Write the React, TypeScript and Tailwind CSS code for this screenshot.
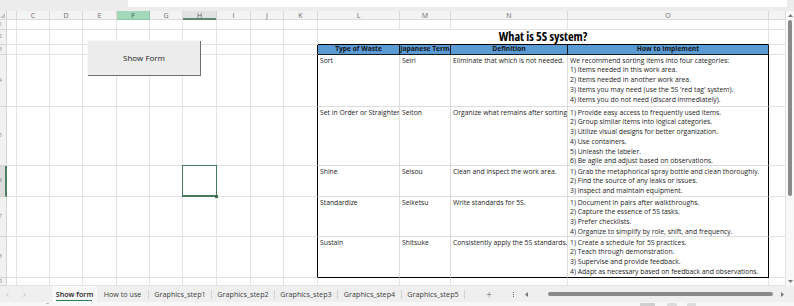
import React from "react";
import { ChevronLeft, ChevronRight } from "lucide-react";

type Entry = { l: string; m: string; n: string; o: string[] };

const data: Entry[] = [
  {
    l: "Sort",
    m: "Seiri",
    n: "Eliminate that which is not needed.",
    o: [
      "We recommend sorting items into four categories:",
      "1) Items needed in this work area.",
      "2) Items needed in another work area.",
      "3) Items you may need (use the 5S 'red tag' system).",
      "4) Items you do not need (discard immediately).",
    ],
  },
  {
    l: "Set in Order or Straighten",
    m: "Seiton",
    n: "Organize what remains after sorting.",
    o: [
      "1) Provide easy access to frequently used items.",
      "2) Group similar items into logical categories.",
      "3) Utilize visual designs for better organization.",
      "4) Use containers.",
      "5) Unleash the labeler.",
      "6) Be agile and adjust based on observations.",
    ],
  },
  {
    l: "Shine",
    m: "Seisou",
    n: "Clean and inspect the work area.",
    o: [
      "1) Grab the metaphorical spray bottle and clean thoroughly.",
      "2) Find the source of any leaks or issues.",
      "3) Inspect and maintain equipment.",
    ],
  },
  {
    l: "Standardize",
    m: "Seiketsu",
    n: "Write standards for 5S.",
    o: [
      "1) Document in pairs after walkthroughs.",
      "2) Capture the essence of 5S tasks.",
      "3) Prefer checklists.",
      "4) Organize to simplify by role, shift, and frequency.",
    ],
  },
  {
    l: "Sustain",
    m: "Shitsuke",
    n: "Consistently apply the 5S standards.",
    o: [
      "1) Create a schedule for 5S practices.",
      "2) Teach through demonstration.",
      "3) Supervise and provide feedback.",
      "4) Adapt as necessary based on feedback and observations.",
    ],
  },
];

const letters = ["", "", "C", "D", "E", "F", "G", "H", "I", "J", "K", "L", "M", "N", "O", ""];
const headers = ["Type of Waste", "Japanese Term", "Definition", "How to Implement"];

function Grid() {
  const cells: React.ReactNode[] = [];
  for (let r = 0; r < 10; r++) {
    for (let c = 0; c < 16; c++) {
      const key = `${r}-${c}`;
      if (r === 0) {
        if (c === 0) {
          cells.push(
            <div key={key} className="relative border-r border-b border-[#d4d4d4] bg-[#f1f1f1]">
              <svg className="absolute bottom-[1px] left-[0px]" width="5" height="5" viewBox="0 0 5 5">
                <polygon points="5,0 5,5 0,5" fill="#c4c4c4" />
              </svg>
            </div>
          );
        } else if (c === 5) {
          cells.push(
            <div key={key} className="flex items-center justify-center border-r border-b border-[#8cc6a5] bg-[#a3d8ba] text-[7px] leading-none text-[#2d6a46]">
              {letters[c]}
            </div>
          );
        } else if (c === 7) {
          cells.push(
            <div key={key} className="relative flex items-center justify-center border-r border-[#d4d4d4] bg-[#e2e2e2] text-[7px] leading-none text-[#555]">
              {letters[c]}
              <div className="absolute bottom-0 left-0 right-0 h-[2px] bg-[#5b8a6e]" />
            </div>
          );
        } else {
          cells.push(
            <div key={key} className="flex items-center justify-center border-r border-b border-[#dadada] bg-[#f3f3f3] text-[7px] leading-none text-[#6a6a6a]">
              {letters[c]}
            </div>
          );
        }
        continue;
      }
      if (c === 0) {
        if (r === 6) {
          cells.push(
            <div key={key} className="flex items-center overflow-hidden border-r-2 border-b border-r-[#4f7d61] border-b-[#cfcfcf] bg-[#dcdcdc] text-[5px] text-[#666]">
              <span className="-ml-[1px]">{r}</span>
            </div>
          );
        } else {
          cells.push(
            <div key={key} className="flex items-center overflow-hidden border-r border-b border-[#d6d6d6] bg-[#f1f1f1] text-[5px] text-[#888]">
              <span className="-ml-[1px]">{r}</span>
            </div>
          );
        }
        continue;
      }
      if (r === 2 && c >= 11 && c <= 14) {
        if (c === 11) {
          cells.push(
            <div
              key={key}
              className="col-span-4 flex items-end justify-center border-r border-b border-r-[#e3e3e3] border-b-black pb-[1px] font-stretch-condensed text-[12.3px] leading-[12px] font-bold text-black"
            >
              What is 5S system?
            </div>
          );
        }
        continue;
      }
      if (r === 3 && c >= 11 && c <= 14) {
        cells.push(
          <div
            key={key}
            className="flex items-center justify-center overflow-hidden whitespace-nowrap border-r border-b border-[#1a1a1a] bg-[#5b9bd5] font-stretch-[92%] text-[6.7px] font-bold text-[#141414]"
          >
            {headers[c - 11]}
          </div>
        );
        continue;
      }
      if (r >= 4 && r <= 8 && c >= 11 && c <= 14) {
        const e = data[r - 4];
        const rb = c === 14 ? "border-r-black" : "border-r-[#dcdcdc]";
        const bb = r === 8 ? "border-b-black" : "border-b-[#dcdcdc]";
        const lines = c === 11 ? [e.l] : c === 12 ? [e.m] : c === 13 ? [e.n] : e.o;
        cells.push(
          <div
            key={key}
            className={`overflow-hidden whitespace-nowrap border-r border-b ${rb} ${bb} px-[2px] pt-[0.5px] font-stretch-[90%] text-[6.8px] leading-[9.8px] text-[#1c1c1c]`}
          >
            {lines.map((t, i) => (
              <div key={i}>{t}</div>
            ))}
          </div>
        );
        continue;
      }
      if (c === 10 && r >= 3 && r <= 8) {
        cells.push(<div key={key} className="border-r border-b border-r-black border-b-[#e3e3e3]" />);
        continue;
      }
      if (r === 6 && c === 7) {
        cells.push(
          <div key={key} className="relative border-r border-b border-[#e3e3e3]">
            <div className="absolute -top-px -left-px -right-px -bottom-px border border-b-2 border-[#4a7a5d]" />
            <div className="absolute -right-[2px] -bottom-[2px] h-[3px] w-[3px] bg-[#3e6b50]" />
          </div>
        );
        continue;
      }
      cells.push(<div key={key} className="border-r border-b border-[#e3e3e3]" />);
    }
  }
  return (
    <div className="grid h-[275px] w-[786px] grid-cols-[7px_10px_33px_33px_34px_33px_33px_34px_34px_33px_34px_82px_51px_117px_201px_17px] grid-rows-[9px_10px_15px_10px_52px_59px_31px_40px_41px_8px] overflow-hidden">
      {cells}
    </div>
  );
}

function VScroll() {
  return (
    <div className="flex h-[275px] w-[8px] flex-col items-center bg-[#f8f8f8]">
      <svg className="mt-[3px]" width="5" height="3" viewBox="0 0 5 3">
        <polygon points="2.5,0 5,3 0,3" fill="#7a7a7a" />
      </svg>
      <div className="mt-[3px] h-[176px] w-[4px] rounded-full bg-[#8a8a8a]" />
      <div className="flex-1" />
      <svg className="mb-[3px]" width="5" height="3" viewBox="0 0 5 3">
        <polygon points="0,0 5,0 2.5,3" fill="#7a7a7a" />
      </svg>
    </div>
  );
}

function Sep() {
  return <span className="h-[9px] w-px bg-[#d3d3d3]" />;
}

function TabBar() {
  const others: { name: string; w: string }[] = [
    { name: "Graphics_step1", w: "w-[62px]" },
    { name: "Graphics_step2", w: "w-[62px]" },
    { name: "Graphics_step3", w: "w-[62px]" },
    { name: "Graphics_step4", w: "w-[63px]" },
    { name: "Graphics_step5", w: "w-[62px]" },
  ];
  return (
    <div className="flex h-[16px] items-center bg-[#efefef] text-[7.2px] text-[#404040]">
      <div className="flex w-[52px] items-center">
        <ChevronLeft className="ml-[4px]" size={7} color="#a8a8a8" strokeWidth={2} />
        <ChevronRight className="ml-[10px]" size={7} color="#a8a8a8" strokeWidth={2} />
      </div>
      <div className="relative flex h-full w-[45px] items-center justify-center bg-[#f9f9f9] pt-[1px] font-semibold text-[#1a1a1a]">
        Show form
        <div className="absolute bottom-[1px] left-[4px] right-[5px] h-[1.5px] bg-[#2f7a4f]" />
      </div>
      <div className="flex h-full w-[51px] items-center justify-center pt-[1px]">How to use</div>
      <Sep />
      {others.map((t) => (
        <React.Fragment key={t.name}>
          <div className={`flex h-full ${t.w} items-center justify-center pt-[1px]`}>{t.name}</div>
          <Sep />
        </React.Fragment>
      ))}
      <div className="w-[19px]" />
      <div className="flex w-[10px] items-center justify-center text-[10px] font-light leading-none text-[#555]">+</div>
      <div className="w-[17px]" />
      <div className="flex w-[4px] flex-col items-center gap-[1px]">
        <span className="h-[1px] w-[1px] bg-[#666]" />
        <span className="h-[1px] w-[1px] bg-[#666]" />
        <span className="h-[1px] w-[1px] bg-[#666]" />
      </div>
      <div className="w-[9px]" />
      <svg width="6" height="5" viewBox="0 0 6 5">
        <polygon points="1,2.5 4,0 4,5" fill="#777" />
      </svg>
      <div className="w-[18px]" />
      <div className="h-[4px] w-[225px] rounded-full bg-[#8a8a8a]" />
      <div className="w-[6px]" />
      <svg width="6" height="5" viewBox="0 0 6 5">
        <polygon points="5,2.5 2,0 2,5" fill="#777" />
      </svg>
    </div>
  );
}

function StatusBar() {
  return (
    <div className="flex h-[4px] items-start bg-[#f7f7f7]">
      <div className="ml-[46px] mt-[1px] h-[1px] w-[3px] bg-[#bbb]" />
      <div className="ml-[591px] mt-[1px] h-[3px] w-[15px] rounded-t-[1px] bg-[#cfcfcf]" />
      <div className="ml-[12px] mt-[1px] h-[3px] w-[10px] rounded-t-[1px] bg-[#dcdcdc]" />
      <div className="ml-[10px] mt-[1px] h-[3px] w-[9px] rounded-t-[1px] bg-[#dcdcdc]" />
    </div>
  );
}

export default function App() {
  return (
    <div className="relative flex h-[306px] w-[794px] flex-col overflow-hidden bg-white font-['Open_Sans',sans-serif]">
      <div className="flex h-[11px] bg-[#ececec]">
        <div className="w-[128px]" />
        <div className="h-[7px] w-[659px] bg-white" />
      </div>
      <div className="flex h-[275px]">
        <Grid />
        <VScroll />
      </div>
      <TabBar />
      <StatusBar />
      <div className="absolute left-[87px] top-[40px] flex h-[35px] w-[113px] items-center justify-center border-t border-l border-[#f6f6f6] bg-[#ececec] text-[8px] text-[#222] shadow-[1px_1px_0_#6f6f6f]">
        Show Form
      </div>
    </div>
  );
}
